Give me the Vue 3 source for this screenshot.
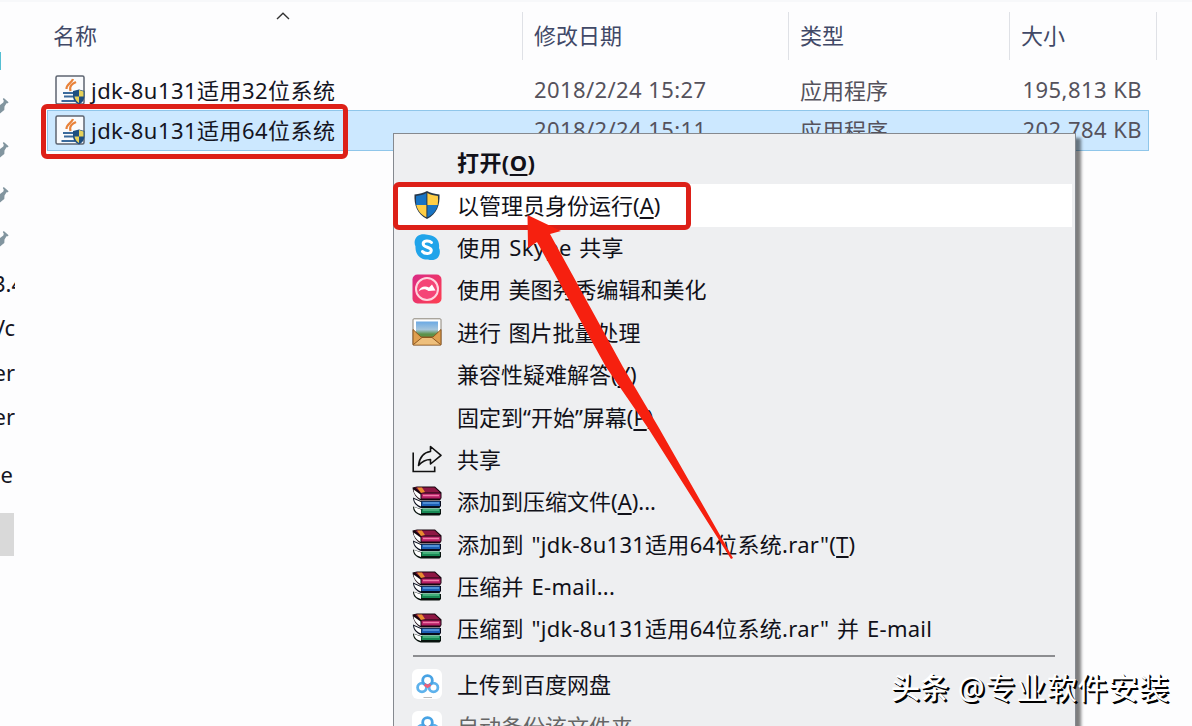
<template>
  <div class="explorer">
    <aside class="nav">
      <div class="nav-accent"></div>
      <div class="pin-list">
        <svg v-for="n in 4" :key="n" class="pin" viewBox="0 0 10 20">
          <path d="M3.8 1 L8.600 5.300 L7.800 6.300 L6.500 6.300 L4.500 9.500 L4.300 13 L3 14 L0 16.500 V8 L3.300 5.500 L3.800 3.800 L2.800 2 Z" fill="#82959f" />
        </svg>
      </div>
      <div class="nav-item" v-for="(item, i) in navItems" :key="i" :class="item.cls">
        <span>{{ item.text }}</span>
      </div>
      <div class="nav-selected"></div>
    </aside>

    <main class="files">
      <div class="file-head">
        <div class="col name">
          <span>名称</span>
          <svg class="sort" viewBox="0 0 14 8"><path d="M1 7 L7 1.3 L13 7" fill="none" stroke="#333" stroke-width="1.4" /></svg>
        </div>
        <div class="col date"><span>修改日期</span></div>
        <div class="col type"><span>类型</span></div>
        <div class="col size"><span>大小</span></div>
      </div>
      <div class="file-row" v-for="file in files" :key="file.name" :class="{ selected: file.selected }">
        <div class="cell name">
          <svg class="file-icon" viewBox="0 0 30 30">
            <rect x="1" y="1" width="28" height="28" rx="1.5" fill="#fafbfd" stroke="#5d6470" stroke-width="1.5" />
            <path d="M18 4 C17 8 11 9 11.500 14 M21 7 C17 9 14 11 15.500 16" fill="none" stroke="#e8823a" stroke-width="2.200" />
            <path d="M8 18 H20 M9 21.500 H19 M6.500 26 H20" fill="none" stroke="#3a6a9c" stroke-width="2" />
            <path d="M18 16 L24 14.500 L29.500 16 V21 C29.500 25 27 28 24 29.500 C20.500 28 18 25 18 21 Z" fill="#1f4f80" />
            <path d="M24 15 L28.500 16.500 V21.500 H24 Z M19.500 21.500 H24 V28 C21.500 26.500 20 24.500 19.500 21.500 Z" fill="#e8d25a" />
          </svg>
          <span>{{ file.name }}</span>
        </div>
        <div class="cell date"><span>{{ file.date }}</span></div>
        <div class="cell type"><span>应用程序</span></div>
        <div class="cell size"><span>{{ file.size }}</span></div>
      </div>
    </main>

    <div class="menu">
      <template v-for="(item, i) in menuItems" :key="i">
        <div v-if="item.line" class="menu-line"></div>
        <div v-else class="menu-item" :class="[item.cls, { active: item.active, bold: item.bold }]">
          <div class="menu-icon">
            <svg v-if="item.icon === 'shield'" viewBox="0 0 30 30">
              <path d="M15 1 C18 3 23 4 27.500 4.500 C28 15 25 24 15 29 C5 24 2 15 2.500 4.500 C7 4 12 3 15 1 Z" fill="#27384a" />
              <path d="M14.400 3 V15 H4.300 C3.800 12 3.900 9 4.100 6 C8 5.600 11.500 4.700 14.400 3 Z M15.400 15 H25.700 C24.500 20.500 21 24.500 15.400 27.300 Z" fill="#1874c4" />
              <path d="M15.400 3 C18.500 4.700 22 5.600 25.900 6 C26.100 9 26.200 12 25.700 15 H15.400 Z M4.300 15 H14.400 V27.300 C9 24.500 5.500 20.500 4.300 15 Z" fill="#ffce45" />
            </svg>
            <svg v-else-if="item.icon === 'skype'" viewBox="0 0 30 30">
              <path d="M9 2.500 C12 1.800 14 3 17 3 C24 4 28 9 27 16 C28.500 19 28 23 26 25.500 C23 28.500 19 28.500 16 27.500 C8 28 3 22 3.500 14.500 C1 9 4 3.500 9 2.500 Z" fill="#20a4ea" />
              <path d="M19.500 10.500 C17 8 11 8.500 11.200 12 C11.500 16 19.500 14.500 19.300 18.500 C19 22.500 12.500 22 10.500 19.500" fill="none" stroke="#fff" stroke-width="3" stroke-linecap="round" />
            </svg>
            <svg v-else-if="item.icon === 'meitu'" viewBox="0 0 30 30">
              <defs>
                <linearGradient id="meitu" x1="0" y1="0" x2="1" y2="1">
                  <stop offset="0" stop-color="#d92a86" />
                  <stop offset="1" stop-color="#ff4050" />
                </linearGradient>
              </defs>
              <rect x="0.500" y="0.500" width="29" height="29" rx="5" fill="url(#meitu)" />
              <circle cx="15" cy="15" r="11" fill="#f54476" stroke="#ffd4de" stroke-width="2" />
              <path d="M6.500 17.500 C8 12.500 13 11.500 17 13.500 L20 10.500 L23.500 16.500 L16.500 17 C13 14.500 10 15 6.500 17.500 Z" fill="#fff" />
            </svg>
            <svg v-else-if="item.icon === 'picture'" viewBox="0 0 30 30">
              <defs>
                <linearGradient id="sky" x1="0" y1="0" x2="0" y2="1">
                  <stop offset="0" stop-color="#6ba9e4" />
                  <stop offset="0.450" stop-color="#a5c5dc" />
                  <stop offset="0.700" stop-color="#5c9149" />
                </linearGradient>
              </defs>
              <rect x="1" y="1.800" width="28" height="26" rx="1" fill="#fff" stroke="#8a8478" stroke-width="1" />
              <rect x="4" y="4.500" width="22" height="18" fill="url(#sky)" />
              <path d="M1 12.500 L9 20 H21 L29 12.500 V28 H1 Z" fill="#df9f4f" stroke="#8c5620" stroke-width="1" />
              <path d="M1.500 27.500 L10 20.500 H20 L28.500 27.500" fill="#eebf7c" stroke="#8c5620" stroke-width="1" />
            </svg>
            <svg v-else-if="item.icon === 'share'" viewBox="0 0 30 30">
              <path d="M1.200 8.500 V27.500 H22.700 V22.500" fill="none" stroke="#111" stroke-width="1.600" />
              <path d="M18.500 2.500 L29 11.300 L18.500 20 V15.500 C13 15.500 10 17.500 6.500 21.500 C7.500 13.500 11.500 8.500 18.500 7.500 Z" fill="none" stroke="#111" stroke-width="1.600" stroke-linejoin="round" />
            </svg>
            <svg v-else-if="item.icon === 'rar'" viewBox="0 0 30 30">
              <path d="M1 20.500 L9 23 H29 V28 L27.500 29.500 H9 C4 28 1 25.500 1 20.500 Z" fill="#08130e" />
              <path d="M2 21 L9 23.500 V28 C5 27 2.500 25 2 21 Z" fill="#fff" />
              <path d="M9.500 22.500 H28 V27 H9.500 Z" fill="#188a55" />
              <path d="M11 24 H27" stroke="#65c996" stroke-width="1.200" />
              <path d="M1 11.500 L9 15 H29 V20 L27.500 22 H9 C4 20 1 16.500 1 11.500 Z" fill="#080c1c" />
              <path d="M2 13 L9 16 V20.500 C5 19 2.500 16.500 2 13 Z" fill="#fff" />
              <path d="M9.500 15.500 H28 V20 H9.500 Z" fill="#1c5eb4" />
              <path d="M11 17 H27" stroke="#72b0ed" stroke-width="1.200" />
              <path d="M0.500 1.500 L5 0.500 H23 L29.500 6.500 V12 L28 14.500 H9 C4 12 1 7 0.500 1.500 Z" fill="#17050e" />
              <path d="M1.500 3.500 L8.500 8.500 V13 C4.500 11 2 7.500 1.500 3.500 Z" fill="#fff" />
              <path d="M3 1.500 H22.500 L28 6.500 H9 Z" fill="#8e1644" />
              <path d="M9.500 7.500 H28.500 V12.500 H9.500 Z" fill="#b51f65" />
              <path d="M11 9.500 H27" stroke="#f07baa" stroke-width="1.500" />
              <path d="M5 1.500 H10 L13 6 L9 7 Z" fill="#e98c30" />
            </svg>
            <svg v-else-if="item.icon === 'baidu'" viewBox="0 0 30 30">
              <rect width="30" height="30" rx="6" fill="#fff" />
              <g fill="none" stroke-width="2.800">
                <circle cx="10" cy="18.500" r="4.400" stroke="#5eb2ec" />
                <circle cx="21.500" cy="18.500" r="4.400" stroke="#5eb2ec" />
                <circle cx="15.500" cy="11.500" r="4.800" stroke="#48a3e4" />
                <path d="M12.500 15.500 L15.500 17.500 L18.500 15.500" stroke="#ee5e77" />
              </g>
              <path d="M11.500 28.500 H20" stroke="#bbb" />
            </svg>
          </div>
          <span class="menu-text">{{ item.text }}<template v-if="item.key">(<u>{{ item.key }}</u>)</template>{{ item.tail }}</span>
        </div>
      </template>
    </div>

    <!-- 标注 -->
    <div class="mark mark-file"></div>
    <div class="mark mark-run"></div>
    <svg class="arrow" viewBox="0 0 1192 726">
      <path d="M527.500 215 L561 231 L550 234 L623 367 L659 428 L733 558 L731 559 L648 428 L606 367 L537 242 L528 248 Z" fill="#f6200f" />
    </svg>

    <div class="watermark"><b>头条</b> <span>@专业软件安装</span></div>
  </div>
</template>

<script setup>
const navItems = [
  { text: '3.4', cls: 'version' },
  { text: 'Vc', cls: 'vc' },
  { text: 'er', cls: 'er' },
  { text: 'er', cls: 'er' },
  { text: 'e', cls: 'last' },
];

const files = [
  { name: 'jdk-8u131适用32位系统', date: '2018/2/24 15:27', size: '195,813 KB' },
  { name: 'jdk-8u131适用64位系统', date: '2018/2/24 15:11', size: '202,784 KB', selected: true },
];

const menuItems = [
  { text: '打开', key: 'O', bold: true },
  { text: '以管理员身份运行', key: 'A', icon: 'shield', active: true },
  { text: '使用 Skype 共享', icon: 'skype', cls: 'wide' },
  { text: '使用 美图秀秀编辑和美化', icon: 'meitu' },
  { text: '进行 图片批量处理', icon: 'picture' },
  { text: '兼容性疑难解答', key: 'Y' },
  { text: '固定到“开始”屏幕', key: 'P' },
  { text: '共享', icon: 'share' },
  { text: '添加到压缩文件', key: 'A', tail: '...', icon: 'rar' },
  { text: '添加到 "jdk-8u131适用64位系统.rar"', key: 'T', icon: 'rar', cls: 'wide' },
  { text: '压缩并 E-mail...', icon: 'rar', cls: 'wide' },
  { text: '压缩到 "jdk-8u131适用64位系统.rar" 并 E-mail', icon: 'rar', cls: 'wide' },
  { line: true },
  { text: '上传到百度网盘', icon: 'baidu' },
  { text: '自动备份该文件夹', icon: 'baidu', cls: 'dim' },
];
</script>

<style>
body {
  overflow: hidden;
}
</style>

<style scoped>
.explorer {
  position: relative;
  display: flex;
  width: 1192px;
  height: 726px;
  overflow: hidden;
  background: #fdfdfe;
  color: #15151f;
  font-family: 'Noto Sans', 'Noto Sans CJK SC', sans-serif;
  font-size: 22px;
  box-sizing: border-box;
  border-top: 2px solid #f7f8fa;
}

/* 左侧导航 */
.nav {
  width: 15px;
  flex: none;
  overflow: hidden;
}
.nav-accent {
  width: 1px;
  height: 18px;
  margin-top: 50px;
  background: #55bfd3;
}
.pin-list {
  display: flex;
  flex-direction: column;
  gap: 24.400px;
  padding-top: 27px;
  margin-bottom: 11px;
}
.pin {
  display: block;
  width: 10px;
  height: 20px;
}
.nav-item {
  display: flex;
  justify-content: flex-end;
  height: 44.300px;
  line-height: 44px;
  white-space: nowrap;
}
.nav-item.version {
  margin-right: -9px;
}
.nav-item.last {
  margin-top: 14px;
  margin-right: 2px;
}
.nav-selected {
  width: 14px;
  height: 43px;
  margin-top: 16px;
  background: #d9d9d9;
}

/* 文件列表 */
.files {
  flex: 1;
  padding-left: 32px;
}
.file-head,
.file-row {
  display: grid;
  grid-template-columns: 475.500px 266px 221px 147px;
}
.file-head {
  height: 48px;
  margin: 10px 0 10px;
  color: #414967;
}
.col {
  display: flex;
  align-items: center;
  position: relative;
  box-sizing: border-box;
  padding-left: 11.500px;
  border-right: 1px solid #dfe1e6;
}
.col span,
.cell span {
  padding-bottom: 4px;
}
.col.name {
  padding-left: 6px;
}
.sort {
  position: absolute;
  left: 229px;
  top: 0;
  width: 14px;
  height: 8px;
}
.file-row {
  width: 1102px;
  height: 41px;
  box-sizing: border-box;
  grid-template-columns: 475px 266px 221px 1fr;
  color: #55525c;
  border: 1px solid transparent;
}
.file-row.selected {
  margin-top: -2px;
  background: #cce8ff;
  border-color: #8fc6ea;
}
.file-head + .file-row {
  height: 42px;
}
.cell {
  display: flex;
  align-items: center;
  padding-left: 11px;
  white-space: nowrap;
}
.cell.name {
  padding-left: 7px;
  color: #15151f;
  letter-spacing: 0.450px;
}
.file-icon {
  width: 30px;
  height: 30px;
  margin: 0 6px 2px 0;
}
.cell.date {
  letter-spacing: 0.400px;
}
.cell.size {
  justify-content: flex-end;
  padding: 0 6px 0 0;
  letter-spacing: 0.450px;
}

/* 右键菜单 */
.menu {
  position: absolute;
  left: 393px;
  top: 131px;
  width: 683px;
  height: 620px;
  box-sizing: border-box;
  padding: 8px 3px 0 2px;
  background: #eeeff1;
  border: 1px solid #85898f;
  box-shadow: 5px 5px 3px rgba(0, 0, 0, 0.5);
}
.menu-item {
  display: flex;
  align-items: center;
  height: 42.400px;
  padding-left: 16px;
  color: #111119;
  white-space: nowrap;
  word-spacing: 1.800px;
}
.menu-item.wide {
  letter-spacing: 0.260px;
}
.menu-item.active {
  background: #fff;
}
.menu-item.bold {
  font-weight: 700;
  letter-spacing: 0.400px;
}
.menu-item.dim {
  color: #666;
}
.menu-icon {
  width: 30px;
  height: 30px;
  margin: 0 15px 2px 0;
}
.menu-icon svg {
  display: block;
  width: 30px;
  height: 30px;
}
.menu-text {
  padding-bottom: 4px;
}
.menu-text u {
  text-decoration-thickness: 1.500px;
  text-underline-offset: 3px;
}
.menu-line {
  height: 2px;
  margin: 4.500px 17px 6.500px 17px;
  background: #8c8d90;
}

/* 红色标注框与箭头 */
.mark {
  position: absolute;
  box-sizing: border-box;
  border: 5px solid #dd2018;
  border-radius: 6px;
}
.mark-file {
  left: 41px;
  top: 102px;
  width: 307px;
  height: 55px;
}
.mark-run {
  left: 393px;
  top: 180px;
  width: 298px;
  height: 48px;
}
.arrow {
  position: absolute;
  left: 0;
  top: -2px;
  width: 1192px;
  height: 726px;
}

.watermark {
  position: absolute;
  left: 891px;
  top: 664px;
  font-size: 30px;
  line-height: 44px;
  color: #fff;
  white-space: nowrap;
  text-shadow: 1px 1px 0 #000, 2px 2px 0 #000;
}
.watermark b {
  font-size: 29px;
  font-weight: 500;
}
.watermark span {
  margin-left: 1px;
  letter-spacing: 0.700px;
}
</style>
